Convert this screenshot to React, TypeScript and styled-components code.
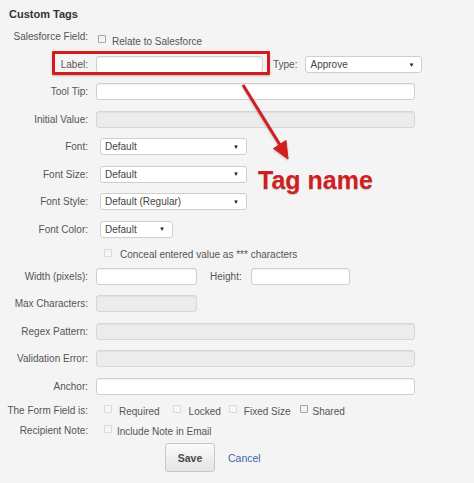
import React from "react";
import styled, { createGlobalStyle } from "styled-components";

const GlobalStyle = createGlobalStyle`
    html, body {
        margin: 0;
        padding: 0;
        background: #f4f4f4;
    }
    body {
        font-family: "Liberation Sans", Arial, sans-serif;
    }
`

/* Page and title */

const Page = styled.div`
    position: relative;
    width: 474px;
    height: 483px;
    padding-top: 8px;
    box-sizing: border-box;
    overflow: hidden;
`

const Title = styled.h3`
    margin: 0 0 0 9px;
    height: 12px;
    line-height: 12px;
    font-size: 11px;
    font-weight: bold;
    color: #333;
`

/* Form rows */

const Form = styled.div`
    display: flex;
    flex-direction: column;
    margin-top: 1px;
`

const Row = styled.div<{ $h: number }>`
    display: flex;
    align-items: center;
    height: ${({ $h }) => $h}px;
    flex-shrink: 0;
`

const Label = styled.label<{ $inline?: boolean }>`
    width: ${({ $inline }) => ($inline ? "auto" : "88px")};
    flex-shrink: 0;
    text-align: right;
    font-size: 10px;
    color: #555;
    white-space: nowrap;
    margin: ${({ $inline }) => ($inline ? "0 9px 0 13px" : "0 8px 0 0")};
`

const TypeLabel = styled(Label)`
    margin: 0 8px 0 10px;
`

const Input = styled.div<{ $w: number; $disabled?: boolean }>`
    width: ${({ $w }) => $w}px;
    height: 17px;
    box-sizing: border-box;
    border: 1px solid ${({ $disabled }) => ($disabled ? "#d6d6d6" : "#cfcfcf")};
    border-radius: 3px;
    background: ${({ $disabled }) => ($disabled ? "#ececec" : "#fff")};
    box-shadow: inset 0 1px 1px rgba(0, 0, 0, 0.06);
    flex-shrink: 0;
`

const SelectBox = styled.div<{ $w: number; $gap?: number }>`
    display: flex;
    align-items: center;
    justify-content: space-between;
    width: ${({ $w }) => $w}px;
    height: 17px;
    margin-left: ${({ $gap }) => $gap ?? 4}px;
    padding: 0 7px 0 4px;
    box-sizing: border-box;
    border: 1px solid #cfcfcf;
    border-radius: 3px;
    background: #fff;
    font-size: 10px;
    color: #444;
    flex-shrink: 0;
`

const Caret = styled.span`
    font-size: 6px;
    color: #222;
    line-height: 1;
`

const Select = ({ value, w, gap }: { value: string; w: number; gap?: number }) => (
    <SelectBox $w={w} $gap={gap}>
        <span>{value}</span>
        <Caret>▼</Caret>
    </SelectBox>
);

/* Checkboxes */

const Box = styled.span<{ $on?: boolean; $l: number; $drop?: number }>`
    display: inline-block;
    width: 8px;
    height: 8px;
    box-sizing: border-box;
    margin-left: ${({ $l }) => $l}px;
    border: 1px solid ${({ $on }) => ($on ? "#a5a5a5" : "#d8d8d8")};
    border-radius: 1px;
    background: ${({ $on }) => ($on ? "#f3f3f3" : "#f7f7f7")};
    flex-shrink: 0;
    position: relative;
    top: ${({ $drop }) => $drop ?? -1}px;
`

const CheckText = styled.span<{ $l: number; $drop?: number }>`
    margin-left: ${({ $l }) => $l}px;
    font-size: 10px;
    color: #555;
    white-space: nowrap;
    position: relative;
    top: ${({ $drop }) => $drop ?? 1}px;
`

/* Buttons */

const SaveButton = styled.button`
    margin: 3px 0 0 69px;
    width: 50px;
    height: 29px;
    border: 1px solid #c8c8c8;
    border-radius: 3px;
    background: linear-gradient(#fbfbfb, #e4e4e4);
    font-family: "Liberation Sans", Arial, sans-serif;
    font-size: 10.5px;
    font-weight: bold;
    color: #4a4a4a;
    padding: 0;
`

const CancelLink = styled.a`
    margin: 3px 0 0 13px;
    font-size: 10.5px;
    color: #3d66a8;
    text-decoration: none;
`

/* Annotation on top */

const Highlight = styled.div`
    position: absolute;
    left: 52px;
    top: 51px;
    width: 218px;
    height: 24px;
    box-sizing: border-box;
    border: 3px solid #d21d1f;
    border-radius: 1px;
    box-shadow: 0 1px 2px rgba(0, 0, 0, 0.25);
`

const Arrow = styled.svg`
    position: absolute;
    left: 0;
    top: 0;
    pointer-events: none;
`

const TagName = styled.div`
    position: absolute;
    left: 258px;
    top: 168px;
    font-size: 25px;
    line-height: 25px;
    font-weight: bold;
    color: #d21d1f;
    text-shadow: 0 1px 1px rgba(0, 0, 0, 0.2);
`

export default function App() {
    return (
        <Page>
            <GlobalStyle />
            <Title>Custom Tags</Title>
            <Form>
                <Row $h={30}>
                    <Label>Salesforce Field:</Label>
                    <Box $on $l={2} $drop={3} />
                    <CheckText $l={6} $drop={5}>Relate to Salesforce</CheckText>
                </Row>
                <Row $h={27}>
                    <Label>Label:</Label>
                    <Input $w={167} />
                    <TypeLabel $inline>Type:</TypeLabel>
                    <Select value="Approve" w={117} gap={0} />
                </Row>
                <Row $h={27}>
                    <Label>Tool Tip:</Label>
                    <Input $w={319} />
                </Row>
                <Row $h={28}>
                    <Label>Initial Value:</Label>
                    <Input $w={319} $disabled />
                </Row>
                <Row $h={27}>
                    <Label>Font:</Label>
                    <Select value="Default" w={147} />
                </Row>
                <Row $h={28}>
                    <Label>Font Size:</Label>
                    <Select value="Default" w={147} />
                </Row>
                <Row $h={27.5}>
                    <Label>Font Style:</Label>
                    <Select value="Default (Regular)" w={147} />
                </Row>
                <Row $h={27.5}>
                    <Label>Font Color:</Label>
                    <Select value="Default" w={73} />
                </Row>
                <Row $h={21}>
                    <Label />
                    <Box $l={8} />
                    <CheckText $l={8}>Conceal entered value as *** characters</CheckText>
                </Row>
                <Row $h={24}>
                    <Label>Width (pixels):</Label>
                    <Input $w={101} />
                    <Label $inline>Height:</Label>
                    <Input $w={99} />
                </Row>
                <Row $h={30}>
                    <Label>Max Characters:</Label>
                    <Input $w={101} $disabled />
                </Row>
                <Row $h={27}>
                    <Label>Regex Pattern:</Label>
                    <Input $w={319} $disabled />
                </Row>
                <Row $h={27}>
                    <Label>Validation Error:</Label>
                    <Input $w={319} $disabled />
                </Row>
                <Row $h={28}>
                    <Label>Anchor:</Label>
                    <Input $w={319} />
                </Row>
                <Row $h={20}>
                    <Label>The Form Field is:</Label>
                    <Box $l={8} />
                    <CheckText $l={7}>Required</CheckText>
                    <Box $l={13} />
                    <CheckText $l={8}>Locked</CheckText>
                    <Box $l={8} />
                    <CheckText $l={7}>Fixed Size</CheckText>
                    <Box $on $l={9} />
                    <CheckText $l={5}>Shared</CheckText>
                </Row>
                <Row $h={20}>
                    <Label>Recipient Note:</Label>
                    <Box $l={8} />
                    <CheckText $l={5}>Include Note in Email</CheckText>
                </Row>
                <Row $h={32}>
                    <Label />
                    <SaveButton>Save</SaveButton>
                    <CancelLink href="#">Cancel</CancelLink>
                </Row>
            </Form>

            <Highlight />
            <Arrow width="474" height="483" viewBox="0 0 474 483">
                <g fill="#d21d1f" stroke="#d21d1f" style={{ filter: "drop-shadow(0 1px 1px rgba(0,0,0,0.25))" }}>
                    <line x1="243" y1="85" x2="280" y2="145" strokeWidth="3" />
                    <polygon points="288,159 273.5,148.5 286,140.5" strokeWidth="1" strokeLinejoin="round" />
                </g>
            </Arrow>
            <TagName>Tag name</TagName>
        </Page>
    );
}
